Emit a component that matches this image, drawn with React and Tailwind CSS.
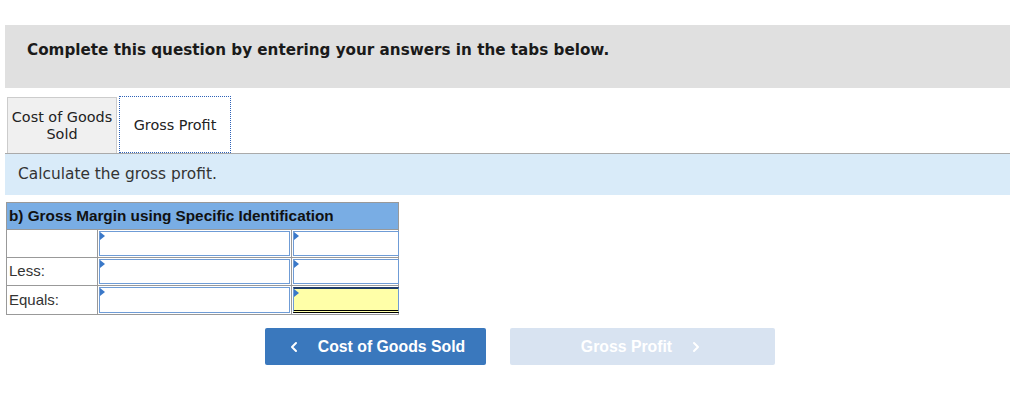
import { ChevronLeft, ChevronRight } from 'lucide-react';

const Marker = () => (
  <span className="absolute left-0 top-0 w-0 h-0 border-t-[4px] border-b-[4px] border-l-[5px] border-t-transparent border-b-transparent border-l-[#3a78c8]" />
);

const Cell = ({ total }) => (
  <div className={`relative h-full ${total ? 'bg-[#ffffa8] border-t-2 border-t-[#1f3d6b] border-x border-b-[3px] border-double border-x-[#6f9cd6] border-b-black' : 'bg-white border border-[#6f9cd6]'}`}>
    <Marker />
  </div>
);

const rows = [
  { label: '' },
  { label: 'Less:' },
  { label: 'Equals:', total: true },
];

export default function App() {
  return (
    <div className="w-[1024px] h-[417px] bg-white pt-[25px] pl-[5px] font-['DejaVu_Sans',sans-serif]">
      <div className="w-[1005px]">
        <div className="h-[63px] bg-[#e0e0e0] pt-[16px] pl-[22px]">
          <p className="text-[15.2px] leading-[18px] font-bold text-[#1a1a1a]">Complete this question by entering your answers in the tabs below.</p>
        </div>

        <div className="mt-[8px] flex items-end border-b border-[#aaaaaa] pl-[2px]">
          <div className="w-[110px] h-[56px] bg-[#f0f0f0] border border-b-0 border-[#cccccc] flex items-center justify-center text-center text-[14.4px] leading-[17px] text-[#222]">
            Cost of Goods<br />Sold
          </div>
          <div className="ml-[2px] w-[112px] h-[57px] bg-white border border-dotted border-[#2e62b8] flex items-center justify-center pt-[2px] text-[14.4px] text-[#222]">
            Gross Profit
          </div>
        </div>

        <div className="h-[41px] bg-[#d9ebf9] flex items-center pl-[13px] pt-[1px]">
          <p className="text-[15.4px] text-[#333]">Calculate the gross profit.</p>
        </div>

        <div className="mt-[7px] ml-[1px] w-[393px] font-['Liberation_Sans',Arial,sans-serif]">
          <div className="h-[28px] bg-[#79ade4] border border-[#999] flex items-center pl-[2px]">
            <p className="text-[15.3px] font-bold text-[#111]">b) Gross Margin using Specific Identification</p>
          </div>
          {rows.map((r, i) => (
            <div key={i} className={`${r.total ? 'h-[29px]' : 'h-[28px]'} grid grid-cols-[91px_194px_108px] border-x border-b border-[#999]`}>
              <div className="flex items-center pl-[2px] text-[15px] text-[#333] border-r border-[#999]">{r.label}</div>
              <div className="p-[1px] border-r border-[#999]"><Cell /></div>
              <div className="p-[1px]"><Cell total={r.total} /></div>
            </div>
          ))}
        </div>

        <div className="mt-[13px] ml-[260px] flex gap-[24px] font-['Liberation_Sans',Arial,sans-serif]">
          <button className="w-[221px] h-[37px] bg-[#3a78bd] rounded-[2px] flex items-center justify-center gap-[16px] pt-[1px] text-white text-[15.8px] font-bold">
            <ChevronLeft size={16} strokeWidth={3} />
            Cost of Goods Sold
          </button>
          <button className="w-[265px] h-[37px] bg-[#d8e3f1] rounded-[2px] flex items-center justify-center gap-[16px] pt-[1px] text-white text-[15.8px] font-bold">
            Gross Profit
            <ChevronRight size={16} strokeWidth={3} />
          </button>
        </div>
      </div>
    </div>
  );
}
